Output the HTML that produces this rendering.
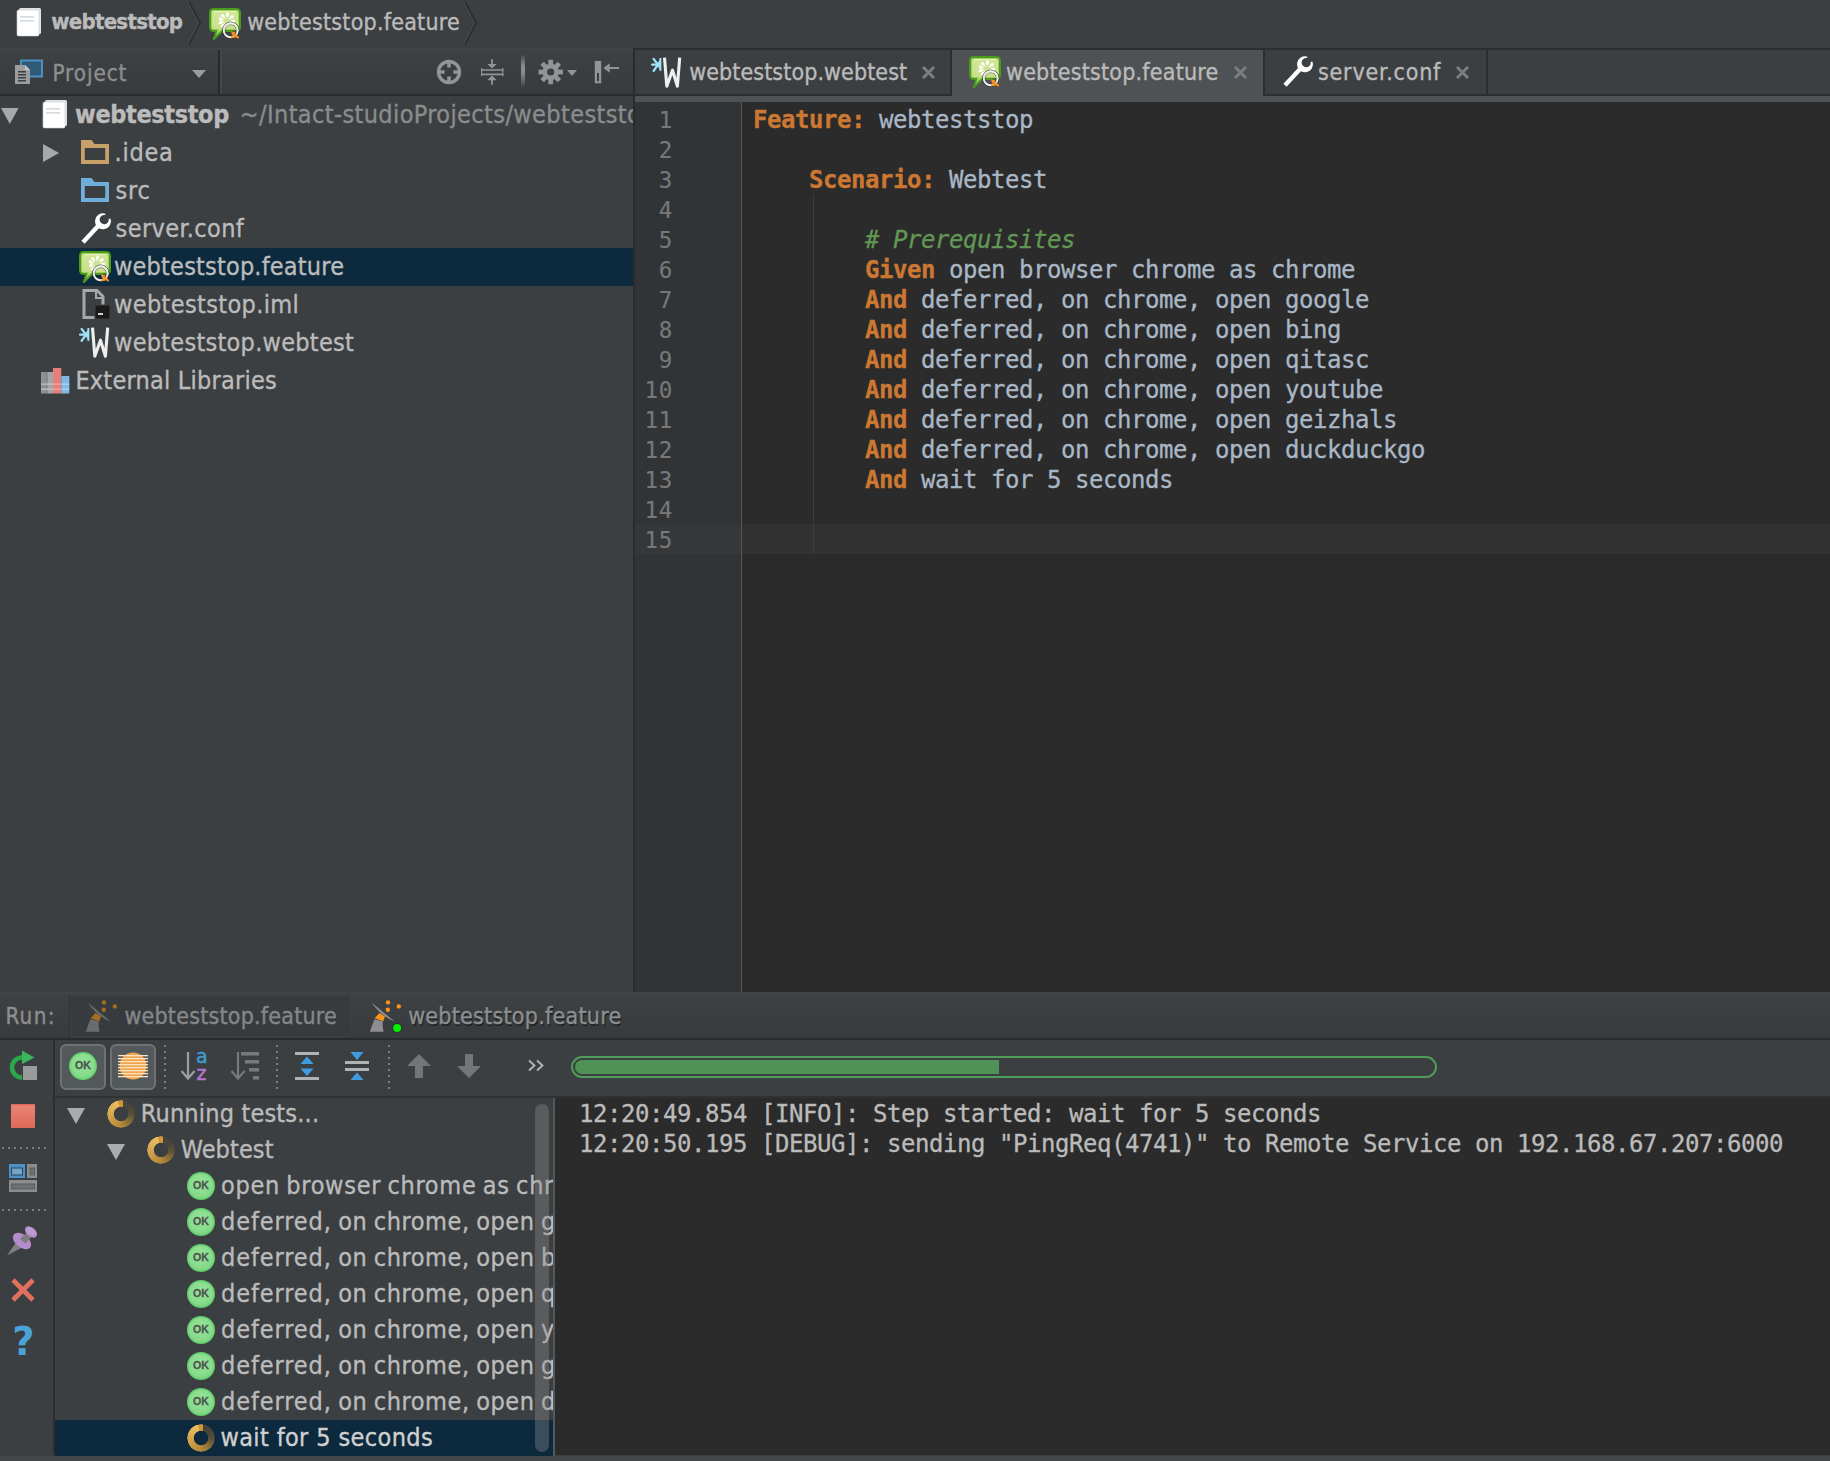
<!DOCTYPE html>
<html><head><meta charset="utf-8"><title>webteststop</title>
<style>
html,body{margin:0;padding:0;background:#3c3f41;}
body{width:1830px;height:1461px;position:relative;overflow:hidden;font-family:"DejaVu Sans Condensed","DejaVu Sans","Liberation Sans",sans-serif;font-size:25px;color:#bbbbbb;}
.abs{position:absolute;}
.t{position:absolute;white-space:nowrap;line-height:38px;height:38px;letter-spacing:0.1px;-webkit-text-stroke:0.35px currentColor;}
.b{font-weight:bold;}
svg{position:absolute;overflow:visible;}
/* top nav */
#nav{left:0;top:0;width:1830px;height:48px;background:#3c3f41;}
#navline{left:0;top:48px;width:633px;height:2px;background:#414345;}
/* project panel */
#phead{left:0;top:50px;width:633px;height:44px;background:linear-gradient(180deg,#3e4143,#383b3d);}
#pheadline{left:0;top:94px;width:633px;height:2px;background:#2b2b2b;}
#tree{left:0;top:96px;width:633px;height:896px;background:#3c3f41;}
#sel{left:0;top:248px;width:633px;height:38px;background:#0d293e;}
#vsplit{left:633px;top:48px;width:2px;height:944px;background:#2a2b2c;}
/* editor */
#tabs{left:636px;top:49px;width:1194px;height:47px;background:#3c3f41;}
#editor{left:635px;top:100px;width:1195px;height:892px;background:#2b2b2b;}
#gutter{left:635px;top:102px;width:106px;height:890px;background:#313335;}
#gline{left:741px;top:102px;width:1px;height:890px;background:#555555;}
#curline{left:742px;top:524px;width:1088px;height:30px;background:#323232;}
.code{position:absolute;white-space:pre;font-family:"DejaVu Sans Mono","Liberation Mono",monospace;font-size:24px;letter-spacing:-0.449px;margin-top:1px;line-height:30px;height:30px;color:#a9b7c6;-webkit-text-stroke:0.300px currentColor;}
.ln{position:absolute;white-space:pre;font-family:"DejaVu Sans Mono","Liberation Mono",monospace;font-size:22.500px;line-height:30px;height:30px;color:#76787a;width:36px;left:636.7px;text-align:right;-webkit-text-stroke:0.150px currentColor;padding-top:0.500px;letter-spacing:0.5px;}
.k{color:#cc7832;font-weight:bold;}
.c{color:#629755;font-style:italic;}
/* bottom */
#bsplit{left:0;top:992px;width:1830px;height:2px;background:#414345;}
#runhead{left:0;top:994px;width:1830px;height:44px;background:linear-gradient(180deg,#3e4143,#383b3d);}
#runline{left:0;top:1038px;width:1830px;height:2px;background:#2b2b2b;}
#rtool{left:0;top:1040px;width:1830px;height:56px;background:#3c3f41;}
#console{left:555px;top:1097px;width:1275px;height:358px;background:#2b2b2b;}
#status{left:0;top:1456px;width:1830px;height:5px;background:#45484a;}

.hdots{background:repeating-linear-gradient(90deg,#7a7d7f 0,#7a7d7f 2px,transparent 2px,transparent 6px);}
.vdots{background:repeating-linear-gradient(180deg,#7a7d7f 0,#7a7d7f 2px,transparent 2px,transparent 6px);}
.rt{line-height:38px;}

.spin{position:absolute;width:28px;height:28px;border-radius:50%;background:conic-gradient(from 0deg,#45443c 0deg,#46443b 50deg,#5b5137 95deg,#8f7238 140deg,#b58a3c 180deg,#c89a44 235deg,#ddae54 290deg,#ebbd62 345deg,#d9993c 346deg,#d9993c 360deg);-webkit-mask:radial-gradient(circle closest-side,transparent 6.800px,#000 7.600px,#000 13.400px,transparent 14px);mask:radial-gradient(circle closest-side,transparent 6.800px,#000 7.600px,#000 13.400px,transparent 14px);}
.spin i{position:absolute;left:11.800px;top:0;width:4.200px;height:7px;background:#d4953a;}
</style></head><body>
<div id="nav" class="abs"></div><div id="navline" class="abs"></div>
<div id="phead" class="abs"></div><div id="pheadline" class="abs"></div>
<div id="tree" class="abs"></div><div id="sel" class="abs"></div>
<div id="vsplit" class="abs"></div>
<div id="tabs" class="abs"></div>
<div id="editor" class="abs"></div><div id="gutter" class="abs"></div><div id="gline" class="abs"></div><div id="curline" class="abs"></div><div class="abs" style="left:635px;top:524px;width:106px;height:30px;background:#353739"></div>
<div id="bsplit" class="abs"></div><div id="runhead" class="abs"></div><div id="runline" class="abs"></div><div id="rtool" class="abs"></div>
<div id="console" class="abs"></div><div id="status" class="abs"></div>
<svg width="0" height="0" style="position:absolute;left:-10px;top:-10px">
<defs>
  <linearGradient id="cukeg" x1="0" y1="0" x2="0" y2="1"><stop offset="0" stop-color="#d3e699"/><stop offset="0.750" stop-color="#c6df88"/><stop offset="1" stop-color="#a5cf60"/></linearGradient>
  <symbol id="cukeicon" viewBox="0 0 32 32" overflow="visible">
    <path d="M5 1 H27 Q31 1 31 5 V19 Q31 23 27 23 H13.200 L4.800 31 L7.600 23 H5 Q1 23 1 19 V5 Q1 1 5 1 Z" fill="url(#cukeg)" stroke="#4a9a22" stroke-width="2" stroke-linejoin="round"/>
    <path d="M5 2.500 H27 Q29.500 2.500 29.500 5 V19 Q29.500 21.500 27 21.500 H12.600 L7.500 26.500 L9.400 21.500 H5 Q2.500 21.500 2.500 19 V5 Q2.500 2.500 5 2.500 Z" fill="none" stroke="#8cc63f" stroke-width="1" stroke-linejoin="round" opacity="0.700"/>
    <path d="M5 3.600 H27" stroke="#f2f7cf" stroke-width="0.900" opacity="0.900"/>
    <g transform="translate(17.800,12.900)" fill="#ffffff"><path d="M0 -2.300 C-0.400 -3.800 -1.700 -5.800 -1.500 -6.900 A1.500 1.500 0 0 1 1.500 -6.900 C1.700 -5.800 0.400 -3.800 0 -2.300 Z" transform="rotate(-140)"/><path d="M0 -2.300 C-0.400 -3.800 -1.700 -5.800 -1.500 -6.900 A1.500 1.500 0 0 1 1.500 -6.900 C1.700 -5.800 0.400 -3.800 0 -2.300 Z" transform="rotate(-106)"/><path d="M0 -2.300 C-0.400 -3.800 -1.700 -5.800 -1.500 -6.900 A1.500 1.500 0 0 1 1.500 -6.900 C1.700 -5.800 0.400 -3.800 0 -2.300 Z" transform="rotate(-73)"/><path d="M0 -2.300 C-0.400 -3.800 -1.700 -5.800 -1.500 -6.900 A1.500 1.500 0 0 1 1.500 -6.900 C1.700 -5.800 0.400 -3.800 0 -2.300 Z" transform="rotate(-38)"/><path d="M0 -2.300 C-0.400 -3.800 -1.700 -5.800 -1.500 -6.900 A1.500 1.500 0 0 1 1.500 -6.900 C1.700 -5.800 0.400 -3.800 0 -2.300 Z" transform="rotate(6)"/><path d="M0 -2.300 C-0.400 -3.800 -1.700 -5.800 -1.500 -6.900 A1.500 1.500 0 0 1 1.500 -6.900 C1.700 -5.800 0.400 -3.800 0 -2.300 Z" transform="rotate(52)"/><path d="M0 -2.300 C-0.400 -3.800 -1.700 -5.800 -1.500 -6.900 A1.500 1.500 0 0 1 1.500 -6.900 C1.700 -5.800 0.400 -3.800 0 -2.300 Z" transform="rotate(93)"/></g>
    <circle cx="21.700" cy="22.300" r="8.300" fill="none" stroke="#26282a" stroke-width="1" opacity="0.750"/>
    <circle cx="21.700" cy="22.300" r="5.700" fill="none" stroke="#26282a" stroke-width="0.800" opacity="0.600"/>
    <circle cx="21.700" cy="22.300" r="7" fill="none" stroke="#ededed" stroke-width="2"/>
    <path d="M21.700 22.800 H27 A5.400 5.400 0 0 1 24 27.200 Z" fill="#2f3133" opacity="0.700"/>
    <path d="M24.500 25.800 L29.600 30" stroke="#f7941d" stroke-width="2.200" stroke-linecap="butt"/>
    <path d="M21.900 23 L26.600 24.300 L23.200 27.800 Z" fill="#f7941d"/>
    <path d="M22 29.400 Q25.500 29.600 27.800 27.200" stroke="#f7941d" stroke-width="1.900" fill="none"/>
  </symbol>
  <symbol id="wrench" viewBox="0 0 32 32" overflow="visible">
    <path d="M3 29.300 L18.800 12.200" stroke="#ffffff" stroke-width="4.300" stroke-linecap="butt"/>
    <path d="M25.500 0.700 A8 8 0 1 0 30.600 5.800 L28.730 5.800 A4.600 4.600 0 1 1 25 2.070 Z" fill="#ffffff"/>
  </symbol>
  <symbol id="wicon" viewBox="0 0 32 34" overflow="visible">
    <path d="M14.500 1.600 L16.800 30.200 L22.500 14.200 L27.400 30.200 L29.700 1.600" fill="none" stroke="#efefef" stroke-width="3.100" stroke-linejoin="round" stroke-linecap="butt"/>
    <g stroke="#9ee2fb" stroke-width="2.300" stroke-linecap="round" fill="#9ee2fb">
      <path d="M8 8.700 L3.600 2.900" /><path d="M8 8.700 H2.100"/><path d="M8 8.700 L3.600 14.800"/>
    </g>
    <path d="M6.400 8.700 L11.200 2 V14.800 Z" fill="#9ee2fb"/>
    <rect x="9.400" y="2" width="1.800" height="12.800" fill="#9ee2fb"/>
  </symbol>
  <symbol id="runicon" viewBox="0 0 34 34" overflow="visible">
    <path d="M0.900 32.700 Q3 25.500 5.700 20.200 L13.700 22.200 Q13.300 27 14.500 32.700 Z" fill="#6a6c6d"/>
    <path d="M10.400 13.900 L16 17.600 L14.200 22.300 L5.700 19.200 Z" fill="#a86c24"/>
    <path d="M2.800 3.800 L26 22.700 Q11.500 17 2.800 3.800 Z" fill="#6a6c6d"/>
    <circle cx="19" cy="3.400" r="2.200" fill="#a86c24"/><circle cx="18.800" cy="10.700" r="2.200" fill="#a86c24"/><circle cx="29.800" cy="7.400" r="2.200" fill="#a86c24"/>
  </symbol>
  <radialGradient id="okg" cx="0.500" cy="0.400" r="0.600"><stop offset="0" stop-color="#9ae39c"/><stop offset="0.800" stop-color="#86db8b"/><stop offset="1" stop-color="#78d680"/></radialGradient>
  <symbol id="okicon" viewBox="0 0 28 28" overflow="visible">
    <circle cx="14" cy="14" r="14" fill="#63cd6d"/>
    <circle cx="14" cy="14" r="12.600" fill="url(#okg)"/>
    <text x="14" y="17" text-anchor="middle" font-family="Liberation Sans, sans-serif" font-weight="bold" font-size="10.600" fill="#4a574d" stroke="#4a574d" stroke-width="0.300">OK</text>
  </symbol>
  <symbol id="spin" viewBox="0 0 28 28" overflow="visible">
    <circle cx="14" cy="14" r="10.500" fill="none" stroke="#2e3032" stroke-width="5.500"/>
    <path d="M14 3.500 A10.500 10.500 0 1 0 22.500 20.200" fill="none" stroke="#d7a548" stroke-width="5.500"/>
    <path d="M14 3.500 A10.500 10.500 0 0 0 3.600 12" fill="none" stroke="#c08a2e" stroke-width="5.500"/>
    <rect x="13" y="0.700" width="3.500" height="5.600" fill="#b97f25"/>
  </symbol>
<symbol id="runicon2" viewBox="0 0 34 34" overflow="visible">
    <path d="M0.900 32.700 Q3 25.500 5.700 20.200 L13.700 22.200 Q13.300 27 14.500 32.700 Z" fill="#8e8e90"/>
    <path d="M10.400 13.900 L16 17.600 L14.200 22.300 L5.700 19.200 Z" fill="#f7941d"/>
    <path d="M2.800 3.800 L26 22.700 Q11.500 17 2.800 3.800 Z" fill="#8e8e90"/>
    <circle cx="19" cy="3.400" r="2.200" fill="#f7941d"/><circle cx="18.800" cy="10.700" r="2.200" fill="#f7941d"/><circle cx="29.800" cy="7.400" r="2.200" fill="#f7941d"/><circle cx="28.100" cy="29.100" r="4.600" fill="#1f2a1f"/><circle cx="28.100" cy="29.100" r="4" fill="#00f000"/>
  </symbol>
</defs>
</svg>
<!--NAVTEXT-->
<!--TREE_START--><!-- ===== NAV ===== -->
<svg id="navdoc" style="left:16px;top:7px" width="28" height="30" viewBox="0 0 28 30">
  <rect x="3" y="1" width="22" height="26" rx="1.5" fill="#dfe3e6"/>
  <rect x="1" y="3" width="22" height="26" rx="1.5" fill="#ffffff" stroke="#c9ced2" stroke-width="0.6"/>
  <rect x="4" y="9" width="14" height="1.6" fill="#d5dade"/>
  <rect x="4" y="13" width="14" height="1.6" fill="#d5dade"/>
</svg>
<div id="t1" class="t b" style="left:51.2px;top:3px;font-size:22px;letter-spacing:-0.72px;">webteststop</div>
<svg style="left:187px;top:0" width="16" height="46" viewBox="0 0 16 46"><path d="M2 2 L13 23 L2 44" fill="none" stroke="#2b2d2e" stroke-width="2"/><path d="M0.5 2 L11.5 23 L0.5 44" fill="none" stroke="#4a4d4f" stroke-width="1"/></svg>
<svg class="cuke" style="left:209px;top:8px" width="32" height="32" viewBox="0 0 32 32"><use href="#cukeicon"/></svg>
<div id="t2" class="t" style="left:247.2px;top:3px;font-size:23px;letter-spacing:0.23px;">webteststop.feature</div>
<svg style="left:463px;top:0" width="16" height="46" viewBox="0 0 16 46"><path d="M2 2 L13 23 L2 44" fill="none" stroke="#2b2d2e" stroke-width="2"/><path d="M0.5 2 L11.5 23 L0.5 44" fill="none" stroke="#4a4d4f" stroke-width="1"/></svg>

<!-- ===== PROJECT HEADER ===== -->
<svg style="left:14px;top:59px" width="30" height="26" viewBox="0 0 30 26">
  <rect x="7" y="1.5" width="21" height="16" fill="#2f5a78" stroke="#4a90c2" stroke-width="2"/>
  <path d="M1 6 H11 L16 11 V25 H1 Z" fill="#9a9c9d"/>
  <path d="M11 6 V11 H16 Z" fill="#c8c9ca"/>
  <rect x="4" y="12" width="8" height="1.5" fill="#3c3f41"/><rect x="4" y="15" width="8" height="1.5" fill="#3c3f41"/><rect x="4" y="18" width="8" height="1.5" fill="#3c3f41"/><rect x="4" y="21" width="8" height="1.5" fill="#3c3f41"/>
</svg>
<div id="t3" class="t" style="left:52.500px;top:53.500px;font-size:22.300px;color:#8c8e8f;letter-spacing:0.900px;">Project</div>
<svg style="left:191px;top:69px" width="16" height="10" viewBox="0 0 16 10"><path d="M1 1 H15 L8 9 Z" fill="#9a9c9d"/></svg>
<div class="abs" style="left:218px;top:50px;width:2px;height:44px;background:#27292a"></div>
<div class="abs" style="left:220px;top:50px;width:2px;height:44px;background:#44484a"></div>
<!-- target/locate icon -->
<svg style="left:436px;top:59px" width="26" height="26" viewBox="0 0 26 26">
  <circle cx="13" cy="13" r="10.500" fill="none" stroke="#929495" stroke-width="3.400"/>
  <path d="M13 2 V8.600 M13 17.400 V24 M2 13 H8.600 M17.400 13 H24" stroke="#929495" stroke-width="3.600" fill="none"/>
</svg>
<!-- collapse all -->
<svg style="left:479px;top:58px" width="26" height="28" viewBox="0 0 26 28">
  <path d="M2 12 H24.400 M2 16.300 H24.400" stroke="#929495" stroke-width="1.700" fill="none"/>
  <path d="M2.600 10 V14 M23.800 10 V14 M2.600 14.300 V18.300 M23.800 14.300 V18.300" stroke="#929495" stroke-width="1.200" fill="none"/>
  <path d="M13 1.200 V7" stroke="#929495" stroke-width="1.800"/><path d="M8.300 6 H17.700 L13 10.600 Z" fill="#929495"/>
  <path d="M13 26.800 V21" stroke="#929495" stroke-width="1.800"/><path d="M8.300 22.200 H17.700 L13 17.600 Z" fill="#929495"/>
</svg>
<div class="abs" style="left:521px;top:54px;width:3.500px;height:34px;background:linear-gradient(180deg,rgba(120,122,124,0) 0%,#8a8c8d 35%,#8a8c8d 55%,rgba(120,122,124,0) 100%);border-radius:1px"></div>
<!-- gear -->
<svg style="left:538px;top:59px" width="40" height="26" viewBox="0 0 40 26">
  <g transform="translate(12.700,13)" fill="#929495">
    <circle r="8.2"/>
    <g id="teeth"><rect x="-2.4" y="-12.2" width="4.8" height="24.4"/><rect x="-2.4" y="-12.2" width="4.8" height="24.4" transform="rotate(45)"/><rect x="-2.4" y="-12.2" width="4.8" height="24.4" transform="rotate(90)"/><rect x="-2.4" y="-12.2" width="4.8" height="24.4" transform="rotate(135)"/></g>
    <circle r="3.6" fill="#3c3f41"/>
  </g>
  <path d="M29 11 H39 L34 17 Z" fill="#929495"/>
</svg>
<!-- hide -->
<svg style="left:594px;top:60px" width="28" height="24" viewBox="0 0 28 24">
  <rect x="0.800" y="0.900" width="6.400" height="22.400" fill="#929495"/><rect x="3" y="13" width="2" height="8.200" fill="#3c3f41"/>
  <path d="M12 8 H25.200" stroke="#929495" stroke-width="2"/><path d="M15.700 3.300 L9.400 8 L15.700 12.700 Z" fill="#929495"/>
</svg>

<!-- ===== TREE ===== -->
<svg style="left:1.400px;top:108px" width="18" height="16" viewBox="0 0 18 16"><path d="M0 0 H17.600 L8.800 16 Z" fill="#a6a8a9"/></svg>
<svg style="left:42px;top:99px" width="28" height="30" viewBox="0 0 28 30">
  <rect x="3" y="1" width="22" height="26" rx="1.5" fill="#dfe3e6"/>
  <rect x="1" y="3" width="22" height="26" rx="1.5" fill="#ffffff" stroke="#c9ced2" stroke-width="0.6"/>
  <rect x="4" y="9" width="14" height="1.6" fill="#d5dade"/>
  <rect x="4" y="13" width="14" height="1.6" fill="#d5dade"/>
</svg>
<div id="t4" class="t b" style="left:75.0px;top:96px;letter-spacing:-0.37px;">webteststop</div>
<div id="t5" class="t" style="left:239.8px;top:96px;color:#8a8c8d;width:393.4px;overflow:hidden;letter-spacing:0.38px;">~/Intact-studioProjects/webteststop</div>

<svg style="left:42.800px;top:144.200px" width="16" height="18" viewBox="0 0 16 18"><path d="M0 0 L16 9 L0 18 Z" fill="#a6a8a9"/></svg>
<svg style="left:81px;top:139.700px" width="28" height="24" viewBox="0 0 28 24"><path d="M0 0 H10.500 L13.500 4 H28 V24 H0 Z" fill="#c8a06a"/><rect x="3.800" y="8" width="20.400" height="12" fill="#3c3f41"/></svg>
<div id="t6" class="t" style="left:114.6px;top:134px;letter-spacing:0.75px;">.idea</div>

<svg style="left:81px;top:177.700px" width="28" height="24" viewBox="0 0 28 24"><path d="M0 0 H10.500 L13.500 4 H28 V24 H0 Z" fill="#70aedb"/><rect x="3.800" y="8" width="20.400" height="12" fill="#3c3f41"/></svg>
<div id="t7" class="t" style="left:115.6px;top:172px;letter-spacing:0.7px;">src</div>

<svg style="left:80px;top:213px" width="32" height="32" viewBox="0 0 32 32"><use href="#wrench"/></svg>
<div id="t8" class="t" style="left:115.6px;top:210px;letter-spacing:0.38px;">server.conf</div>

<svg style="left:79px;top:251px" width="32" height="32" viewBox="0 0 32 32"><use href="#cukeicon"/></svg>
<div id="t9" class="t" style="left:114.0px;top:248px;letter-spacing:0.19px;">webteststop.feature</div>

<svg style="left:82px;top:289px" width="30" height="32" viewBox="0 0 30 32">
  <path d="M2 1.5 H15 L21 7.5 V28.5 H2 Z" fill="none" stroke="#a5a7a8" stroke-width="3"/>
  <path d="M14 2 V9 H21" fill="none" stroke="#a5a7a8" stroke-width="2"/>
  <rect x="13" y="16" width="15" height="14" fill="#1a1a1a" stroke="#3c3f41" stroke-width="1"/>
  <rect x="16" y="24" width="5" height="2" fill="#d0d0d0"/>
</svg>
<div id="t10" class="t" style="left:114.0px;top:286px;letter-spacing:0.36px;">webteststop.iml</div>

<svg style="left:78px;top:326px" width="32" height="34" viewBox="0 0 32 34"><use href="#wicon"/></svg>
<div id="t11" class="t" style="left:114.0px;top:324px;letter-spacing:0.26px;">webteststop.webtest</div>

<svg style="left:41px;top:368px" width="29" height="26" viewBox="0 0 29 26">
  <rect x="0" y="4" width="6" height="21.500" fill="#8e9091"/><rect x="6" y="4" width="6" height="21.500" fill="#a3a5a6"/>
  <rect x="5.600" y="4" width="0.800" height="21.500" fill="#6f7172"/>
  <rect x="12" y="0" width="8.300" height="25.500" fill="#e57f7a"/><rect x="20.300" y="8" width="8" height="17.500" fill="#7dbbe6"/>
  <rect x="0" y="15.500" width="12" height="1.200" fill="#c2c4c5"/><rect x="0" y="20.500" width="12" height="1.200" fill="#c2c4c5"/>
  <rect x="12" y="15.500" width="8.300" height="1.200" fill="#f2aaa6"/><rect x="12" y="20.500" width="8.300" height="1.200" fill="#f2aaa6"/>
  <rect x="20.300" y="15.500" width="8" height="1.200" fill="#aed6f1"/><rect x="20.300" y="20.500" width="8" height="1.200" fill="#aed6f1"/>
</svg>
<div id="t12" class="t" style="left:75.4px;top:362px;letter-spacing:0.23px;">External Libraries</div>
<!--TREE_END-->
<!--TABS_START--><!-- ===== EDITOR TABS ===== -->
<div class="abs" style="left:635px;top:48px;width:1195px;height:2px;background:#2b2d2e"></div>
<div class="abs" style="left:635px;top:94px;width:1195px;height:2px;background:#2b2d2e"></div>
<div class="abs" style="left:635px;top:96px;width:1195px;height:6px;background:#4e5254"></div>
<div class="abs" style="left:952px;top:50px;width:311px;height:46px;background:#4e5254"></div>
<div class="abs" style="left:950px;top:50px;width:2px;height:44px;background:#2b2d2e"></div>
<div class="abs" style="left:1263px;top:50px;width:2px;height:44px;background:#2b2d2e"></div>
<div class="abs" style="left:1486px;top:50px;width:2px;height:44px;background:#2b2d2e"></div>
<svg style="left:650px;top:56px" width="32" height="34" viewBox="0 0 32 34"><use href="#wicon"/></svg>
<div id="t13" class="t" style="left:689.2px;top:53px;font-size:23px;letter-spacing:0.09px;">webteststop.webtest</div>
<svg class="cx" style="left:922px;top:66px" width="13" height="13" viewBox="0 0 13 13"><path d="M1 1 L12 12 M12 1 L1 12" stroke="#7b7e80" stroke-width="3"/></svg>
<svg style="left:969px;top:56px" width="32" height="32" viewBox="0 0 32 32"><use href="#cukeicon"/></svg>
<div id="t14" class="t" style="left:1006.0px;top:53px;font-size:23px;letter-spacing:0.21px;">webteststop.feature</div>
<svg class="cx" style="left:1234px;top:66px" width="13" height="13" viewBox="0 0 13 13"><path d="M1 1 L12 12 M12 1 L1 12" stroke="#7b7e80" stroke-width="3"/></svg>
<svg style="left:1282px;top:56px" width="32" height="32" viewBox="0 0 32 32"><use href="#wrench"/></svg>
<div id="t15" class="t" style="left:1318.0px;top:53px;font-size:23px;letter-spacing:0.8px;">server.conf</div>
<svg class="cx" style="left:1456px;top:66px" width="13" height="13" viewBox="0 0 13 13"><path d="M1 1 L12 12 M12 1 L1 12" stroke="#7b7e80" stroke-width="3"/></svg>
<!--TABS_END-->
<!--CODE_START--><!-- ===== CODE ===== -->
<div class="abs" style="left:813px;top:194px;width:1px;height:360px;background:#3d3d3d"></div>
<div class="ln" style="top:104px">1</div>
<div class="code" style="left:753px;top:104px"><span class="k">Feature:</span> webteststop</div>
<div class="ln" style="top:134px">2</div>
<div class="ln" style="top:164px">3</div>
<div class="code" style="left:809px;top:164px"><span class="k">Scenario:</span> Webtest</div>
<div class="ln" style="top:194px">4</div>
<div class="ln" style="top:224px">5</div>
<div class="code" style="left:865px;top:224px"><span class="c"># Prerequisites</span></div>
<div class="ln" style="top:254px">6</div>
<div class="code" style="left:865px;top:254px"><span class="k">Given</span> open browser chrome as chrome</div>
<div class="ln" style="top:284px">7</div>
<div class="code" style="left:865px;top:284px"><span class="k">And</span> deferred, on chrome, open google</div>
<div class="ln" style="top:314px">8</div>
<div class="code" style="left:865px;top:314px"><span class="k">And</span> deferred, on chrome, open bing</div>
<div class="ln" style="top:344px">9</div>
<div class="code" style="left:865px;top:344px"><span class="k">And</span> deferred, on chrome, open qitasc</div>
<div class="ln" style="top:374px">10</div>
<div class="code" style="left:865px;top:374px"><span class="k">And</span> deferred, on chrome, open youtube</div>
<div class="ln" style="top:404px">11</div>
<div class="code" style="left:865px;top:404px"><span class="k">And</span> deferred, on chrome, open geizhals</div>
<div class="ln" style="top:434px">12</div>
<div class="code" style="left:865px;top:434px"><span class="k">And</span> deferred, on chrome, open duckduckgo</div>
<div class="ln" style="top:464px">13</div>
<div class="code" style="left:865px;top:464px"><span class="k">And</span> wait for 5 seconds</div>
<div class="ln" style="top:494px">14</div>
<div class="ln" style="top:524px">15</div>
<!--CODE_END-->
<!--RUN_START--><!-- ===== RUN HEADER ===== -->
<div id="t16" class="t" style="left:5.400px;top:997px;font-size:22.300px;color:#8c8e8f;letter-spacing:1.300px;">Run:</div>
<div class="abs" style="left:69px;top:994px;width:1px;height:44px;background:#2f3133"></div>
<div class="abs" style="left:70px;top:995px;width:281px;height:42px;background:#383b3d;border:1px solid #3e4143;box-sizing:border-box"></div>
<svg style="left:85px;top:999px" width="34" height="34" viewBox="0 0 34 34"><use href="#runicon"/></svg>
<div id="t17" class="t" style="left:124.4px;top:997px;font-size:23px;color:#85878a;letter-spacing:0.22px;">webteststop.feature</div>
<svg style="left:369px;top:999px" width="34" height="34" viewBox="0 0 34 34"><use href="#runicon2"/></svg>
<div id="t18" class="t" style="left:408.2px;top:997px;font-size:23px;color:#8c8e8f;text-shadow:1px 1.500px 0 #1f2122;letter-spacing:0.25px;">webteststop.feature</div>
<!-- ===== RUN LEFT TOOLBAR ===== -->
<div class="abs" style="left:53px;top:1040px;width:2px;height:415px;background:#2b2d2e"></div>
<div class="abs" style="left:55px;top:1096px;width:1775px;height:2px;background:#2f3133"></div>
<svg style="left:7px;top:1050px" width="32" height="32" viewBox="0 0 32 32">
<path d="M15 7.500 A10 10 0 1 0 15 27.500" fill="none" stroke="#2aa84a" stroke-width="4.500"/>
<path d="M15 0.500 L27.500 7.500 L15 14 Z" fill="#3db55e"/>
<rect x="16" y="16" width="14" height="14" fill="#9b9b9b"/></svg>
<svg style="left:11px;top:1104px" width="24" height="24" viewBox="0 0 24 24"><defs><linearGradient id="stopg" x1="0" y1="0" x2="0" y2="1"><stop offset="0" stop-color="#d9604f"/><stop offset="0.080" stop-color="#e98274"/><stop offset="1" stop-color="#de6a59"/></linearGradient></defs><rect width="24" height="24" fill="url(#stopg)"/></svg>
<div class="abs hdots" style="left:2px;top:1147px;width:46px;height:2px;"></div>
<svg style="left:9px;top:1164px" width="28" height="28" viewBox="0 0 28 28">
<rect x="0" y="0" width="16" height="14" fill="#4a92c9"/><rect x="2.500" y="4" width="11" height="7" fill="#74a6c8" stroke="#2b4255" stroke-width="1"/>
<rect x="18" y="0" width="10" height="14" fill="#8a8c8d"/><rect x="21" y="4" width="4.500" height="7" fill="#6e7072" stroke="#5a5c5e" stroke-width="1"/>
<rect x="0" y="16" width="28" height="12" fill="#8a8c8d"/><rect x="2.500" y="20" width="23" height="5" fill="#6e7072" stroke="#5a5c5e" stroke-width="1"/></svg>
<div class="abs hdots" style="left:2px;top:1209px;width:46px;height:2px;"></div>
<svg style="left:6px;top:1225px" width="32" height="32" viewBox="0 0 32 32">
<path d="M1 30.500 L11 16 L17 22 Z" fill="#7f8182"/>
<ellipse cx="16" cy="16" rx="10.500" ry="6.500" transform="rotate(38 16 16)" fill="#b48bcb"/>
<path d="M14 14 L21.500 6.500 L25.500 12 L19.500 18.500 Z" fill="#7b7d7e"/>
<ellipse cx="25" cy="7" rx="7" ry="4.500" transform="rotate(40 25 7)" fill="#b48bcb"/>
<ellipse cx="25" cy="6.300" rx="5.500" ry="3.200" transform="rotate(40 25 6.300)" fill="#bf9ad4"/>
</svg>
<svg style="left:11px;top:1278px" width="24" height="24" viewBox="0 0 24 24"><path d="M2 2 L22 22 M22 2 L2 22" stroke="#e3705f" stroke-width="4.600"/></svg>
<div class="abs" style="left:11.500px;top:1317.500px;width:24px;height:48px;line-height:48px;text-align:center;font-family:'DejaVu Sans','Liberation Sans',sans-serif;font-weight:bold;font-size:38.500px;color:#49a2d8;">?</div>
<!-- ===== RUN TOP TOOLBAR ===== -->
<div class="abs" style="left:60px;top:1044px;width:46px;height:46px;box-sizing:border-box;border:2px solid #6e7274;border-radius:6px;background:#53585a"></div>
<svg style="left:69px;top:1052px" width="28" height="28" viewBox="0 0 28 28"><use href="#okicon"/></svg>
<div class="abs" style="left:110px;top:1044px;width:46px;height:46px;box-sizing:border-box;border:2px solid #6e7274;border-radius:6px;background:#53585a"></div>
<svg style="left:117px;top:1052px" width="32" height="28" viewBox="0 0 32 28">
<circle cx="16" cy="14" r="13.500" fill="#f0a54a"/>
<g fill="#fbe3c3"><rect x="1" y="3" width="30" height="1.300"/><rect x="1" y="6" width="30" height="1.300"/><rect x="1" y="9" width="30" height="1.300"/><rect x="1" y="12" width="30" height="1.300"/><rect x="1" y="15" width="30" height="1.300"/><rect x="1" y="18" width="30" height="1.300"/><rect x="1" y="21" width="30" height="1.300"/><rect x="1" y="24" width="30" height="1.300"/></g></svg>
<div class="abs vdots" style="left:164px;top:1045px;width:2px;height:44px;"></div>
<div class="abs vdots" style="left:276px;top:1045px;width:2px;height:44px;"></div>
<div class="abs vdots" style="left:388px;top:1045px;width:2px;height:44px;"></div>
<svg style="left:180px;top:1050px" width="30" height="32" viewBox="0 0 30 32">
<path d="M8 2 V28 M1.500 21 L8 28.500 L14.500 21" fill="none" stroke="#9c9e9f" stroke-width="2.200"/>
<text x="16" y="13" font-family="DejaVu Sans, Liberation Sans, sans-serif" font-size="19" fill="#3f9bd0" stroke="#3f9bd0" stroke-width="0.500">a</text>
<text x="16.500" y="30" font-family="DejaVu Sans, Liberation Sans, sans-serif" font-size="19" fill="#b377cf" stroke="#b377cf" stroke-width="0.500">z</text></svg>
<svg style="left:230px;top:1050px" width="32" height="32" viewBox="0 0 32 32">
<path d="M8 2 V28 M1.500 21 L8 28.500 L14.500 21" fill="none" stroke="#77797a" stroke-width="2.200"/>
<g fill="#77797a"><rect x="11" y="2" width="18" height="3.600"/><rect x="15" y="10" width="14" height="3.600"/><rect x="19" y="18" width="10" height="3.600"/><rect x="23" y="26" width="6" height="3.600"/></g></svg>
<svg style="left:294px;top:1050px" width="26" height="32" viewBox="0 0 26 32">
<rect x="1" y="2" width="24" height="3" fill="#b0b2b3"/><rect x="1" y="27" width="24" height="3" fill="#b0b2b3"/>
<path d="M13 6.500 L19.500 14 H6.500 Z" fill="#3f9be0"/><path d="M13 26 L19.500 18.500 H6.500 Z" fill="#3f9be0"/></svg>
<svg style="left:344px;top:1050px" width="26" height="32" viewBox="0 0 26 32">
<rect x="1" y="11" width="24" height="3" fill="#b0b2b3"/><rect x="1" y="18" width="24" height="3" fill="#b0b2b3"/>
<path d="M13 10 L19.500 2 H6.500 Z" fill="#3f9be0"/><path d="M13 22.500 L19.500 30 H6.500 Z" fill="#3f9be0"/></svg>
<svg style="left:406px;top:1053px" width="26" height="26" viewBox="0 0 26 26"><path d="M13 1 L25 13 H17 V25 H9 V13 H1 Z" fill="#737576"/></svg>
<svg style="left:456px;top:1053px" width="26" height="26" viewBox="0 0 26 26"><path d="M13 25 L25 13 H17 V1 H9 V13 H1 Z" fill="#737576"/></svg>
<svg style="left:527px;top:1059px" width="18" height="14" viewBox="0 0 18 14"><path d="M2 1.500 L7.500 6.500 L2 11.500 M10 1.500 L15.500 6.500 L10 11.500" fill="none" stroke="#b4b6b7" stroke-width="1.800"/></svg>
<div class="abs" style="left:571px;top:1056px;width:866px;height:22px;box-sizing:border-box;border:2px solid #4f9c5b;border-radius:11px;"></div>
<div class="abs" style="left:575px;top:1060px;width:424px;height:14px;background:#4f9258;border-radius:7px 0 0 7px;"></div>
<!-- ===== RUN TREE ===== -->
<div class="abs" style="left:55px;top:1420px;width:498px;height:36px;background:#0d293e"></div>
<svg style="left:66.700px;top:1107.800px" width="18" height="16" viewBox="0 0 18 16"><path d="M0 0 H18 L9 16 Z" fill="#a9abac"/></svg>
<div class="spin" style="left:107px;top:1100px"><i></i></div>
<div id="t19" class="t rt" style="left:140.8px;top:1095px;letter-spacing:0.18px;">Running tests...</div>
<svg style="left:107px;top:1143.800px" width="18" height="16" viewBox="0 0 18 16"><path d="M0 0 H18 L9 16 Z" fill="#a9abac"/></svg>
<div class="spin" style="left:147px;top:1136px"><i></i></div>
<div id="t20" class="t rt" style="left:180.8px;top:1131px;letter-spacing:0.1px;">Webtest</div>
<svg style="left:187px;top:1172px" width="28" height="28" viewBox="0 0 28 28"><use href="#okicon"/></svg>
<div id="t21" class="t rt" style="left:221.0px;top:1167px;width:332px;overflow:hidden;letter-spacing:0.7px;word-spacing:-1.5px;">open browser chrome as chrome</div>
<svg style="left:187px;top:1208px" width="28" height="28" viewBox="0 0 28 28"><use href="#okicon"/></svg>
<div id="t22" class="t rt" style="left:221.0px;top:1203px;width:332px;overflow:hidden;letter-spacing:0.55px;word-spacing:-1.2px;"><span style="letter-spacing:0.9px">deferred,</span> on chrome, open google</div>
<svg style="left:187px;top:1244px" width="28" height="28" viewBox="0 0 28 28"><use href="#okicon"/></svg>
<div id="t23" class="t rt" style="left:221.0px;top:1239px;width:332px;overflow:hidden;letter-spacing:0.55px;word-spacing:-1.2px;"><span style="letter-spacing:0.9px">deferred,</span> on chrome, open bing</div>
<svg style="left:187px;top:1280px" width="28" height="28" viewBox="0 0 28 28"><use href="#okicon"/></svg>
<div id="t24" class="t rt" style="left:221.0px;top:1275px;width:332px;overflow:hidden;letter-spacing:0.55px;word-spacing:-1.2px;"><span style="letter-spacing:0.9px">deferred,</span> on chrome, open qitasc</div>
<svg style="left:187px;top:1316px" width="28" height="28" viewBox="0 0 28 28"><use href="#okicon"/></svg>
<div id="t25" class="t rt" style="left:221.0px;top:1311px;width:332px;overflow:hidden;letter-spacing:0.55px;word-spacing:-1.2px;"><span style="letter-spacing:0.9px">deferred,</span> on chrome, open youtube</div>
<svg style="left:187px;top:1352px" width="28" height="28" viewBox="0 0 28 28"><use href="#okicon"/></svg>
<div id="t26" class="t rt" style="left:221.0px;top:1347px;width:332px;overflow:hidden;letter-spacing:0.55px;word-spacing:-1.2px;"><span style="letter-spacing:0.9px">deferred,</span> on chrome, open geizhals</div>
<svg style="left:187px;top:1388px" width="28" height="28" viewBox="0 0 28 28"><use href="#okicon"/></svg>
<div id="t27" class="t rt" style="left:221.0px;top:1383px;width:332px;overflow:hidden;letter-spacing:0.55px;word-spacing:-1.2px;"><span style="letter-spacing:0.9px">deferred,</span> on chrome, open duckduckgo</div>
<div class="spin" style="left:187px;top:1424px"><i></i></div>
<div id="t28" class="t rt" style="left:220.4px;top:1419px;color:#d0d0d0;letter-spacing:0.38px;">wait for 5 seconds</div>
<div id="rsb" class="abs" style="left:535px;top:1104px;width:14px;height:348px;border-radius:7px;background:rgba(140,142,144,0.360)"></div>
<div class="abs" style="left:553px;top:1098px;width:2px;height:358px;background:#555759"></div>
<!-- ===== CONSOLE ===== -->
<div class="code" style="left:579px;top:1098px;color:#bbbbbb">12:20:49.854 [INFO]: Step started: wait for 5 seconds</div>
<div class="code" style="left:579px;top:1128px;color:#bbbbbb">12:20:50.195 [DEBUG]: sending "PingReq(4741)" to Remote Service on 192.168.67.207:6000</div>
<!--RUN_END-->
</body></html>
